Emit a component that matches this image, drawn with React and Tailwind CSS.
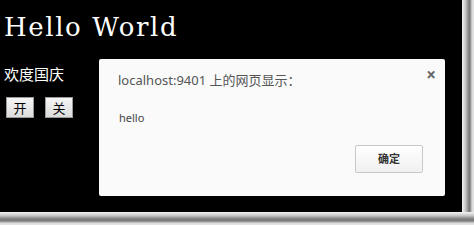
export default function App() {
  return (
    <div className="w-[474px] h-[225px] overflow-hidden bg-[#d9d9d9] flex flex-col">
      <div className="flex h-[212px]">
        <div className="relative w-[462px] h-[212px] bg-black text-white">
          <div className="pl-[4px] pt-[9px] text-[26px] leading-[36px] tracking-[1.6px] font-['DejaVu_Serif',serif]">
            Hello World
          </div>
          <div className="pl-[4px] mt-[19px] text-[15px] leading-[20px] font-['Noto_Sans_CJK_SC',sans-serif]">
            欢度国庆
          </div>
          <div className="flex gap-[11px] pl-[6px] mt-[13px] font-['Noto_Sans_CJK_SC',sans-serif]">
            <button className="w-[28px] h-[21px] border border-[#9a9a9a] bg-gradient-to-b from-[#f6f6f6] to-[#dcdcdc] text-black text-[13px] leading-none">
              开
            </button>
            <button className="w-[28px] h-[21px] border border-[#9a9a9a] bg-gradient-to-b from-[#f6f6f6] to-[#dcdcdc] text-black text-[13px] leading-none">
              关
            </button>
          </div>

          <div className="absolute left-[99px] top-[59px] w-[346px] h-[137px] bg-[#fafafa] rounded-[2px] text-[#444] font-['Noto_Sans','Noto_Sans_CJK_SC',sans-serif]">
            <div className="flex justify-between items-start pl-[19px] pr-[9px] pt-[12px]">
              <span className="text-[13px] leading-[18px] text-[#555]">
                localhost:9401 上的网页显示：
              </span>
              <span className="-mt-[3px] text-[17px] leading-[14px] font-bold text-[#666]">×</span>
            </div>
            <div className="pl-[20px] pt-[22px] text-[11px] leading-[14px] text-[#444]">hello</div>
            <div className="flex justify-end pr-[22px] pt-[20px]">
              <button className="w-[68px] h-[28px] border border-[#c8c8c8] rounded-[2px] bg-gradient-to-b from-[#ffffff] to-[#f0f0f0] text-[11px] font-bold text-[#333]">
                确定
              </button>
            </div>
          </div>
        </div>
        <div className="w-[12px] h-[212px] bg-[linear-gradient(to_right,#f2f2f2_0px,#cfcfcf_3px,#a8a8a8_5px,#7c7c7c_7px,#7c7c7c_8px,#d8d8d8_10px,#e6e6e6_12px)]" />
      </div>
      <div className="h-[13px] w-full bg-[linear-gradient(to_bottom,#f2f2f2_0px,#d0d0d0_3px,#a8a8a8_5px,#7c7c7c_7px,#7c7c7c_9px,#d8d8d8_11px,#e6e6e6_13px)]" />
    </div>
  );
}
